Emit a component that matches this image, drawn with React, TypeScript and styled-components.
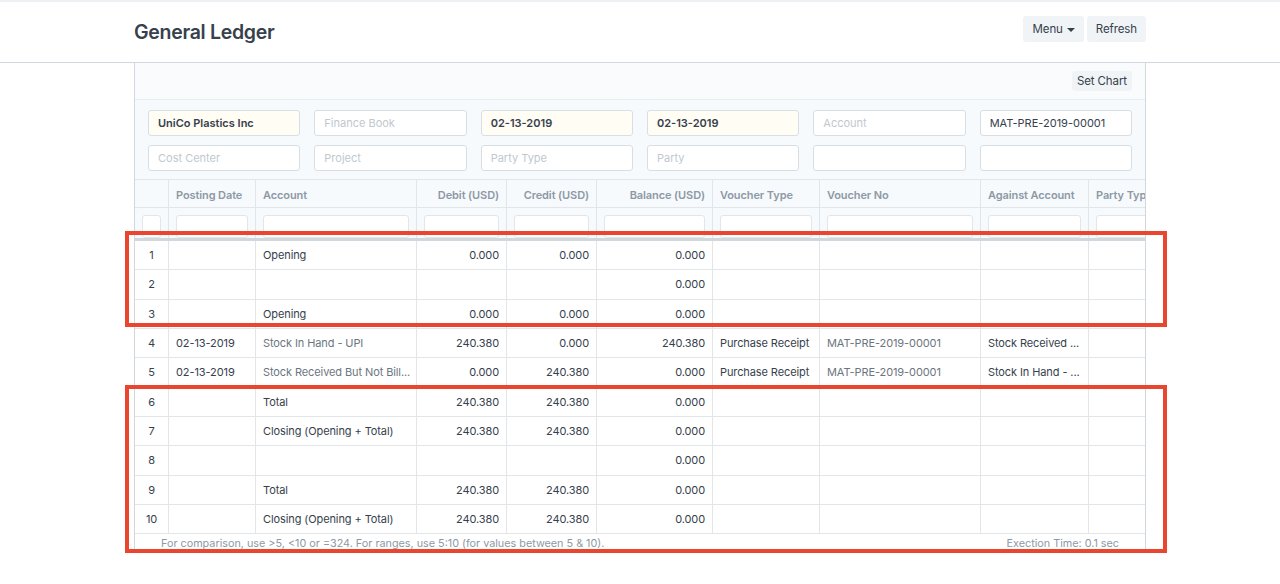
import styled, { createGlobalStyle } from "styled-components";

const GlobalStyle = createGlobalStyle`
  * { box-sizing: border-box; }
  body {
    margin: 0;
    background: #ffffff;
    font-family: Inter, "Noto Sans", "Liberation Sans", sans-serif;
    color: #36414c;
  }
`;

const Root = styled.div`
  position: relative;
  width: 1280px;
  height: 584px;
  overflow: hidden;
`;

const TopStrip = styled.div`
  height: 2px;
  background: #eef1f4;
`;

const PageHead = styled.div`
  height: 61px;
  border-bottom: 1px solid #d1d8dd;
`;

const Container = styled.div`
  width: 1012px;
  margin: 0 auto;
`;

const HeadInner = styled(Container)`
  height: 100%;
  display: flex;
  justify-content: space-between;
  align-items: flex-start;
`;

const Title = styled.h1`
  margin: 17px 0 0;
  font-size: 19.5px;
  font-weight: 600;
  line-height: 26px;
  color: #36414c;
  letter-spacing: -0.3px;
`;

const Actions = styled.div`
  display: flex;
  gap: 3px;
  margin-top: 14px;
`;

const Button = styled.button<{ $small?: boolean }>`
  font-family: inherit;
  border: none;
  border-radius: 3px;
  background: #f0f4f7;
  color: #36414c;
  font-size: 11.5px;
  letter-spacing: -0.1px;
  height: ${(p) => (p.$small ? "20px" : "26px")};
  padding: ${(p) => (p.$small ? "0 5px" : "0 9px")};
  display: flex;
  align-items: center;
  gap: 4px;
  cursor: pointer;
`;

const Caret = styled.span`
  width: 0;
  height: 0;
  border-left: 4px solid transparent;
  border-right: 4px solid transparent;
  border-top: 4px solid #36414c;
  margin-top: 1px;
`;

const Page = styled(Container)`
  border-left: 1px solid #d1d8dd;
  border-right: 1px solid #d1d8dd;
`;

const ChartBar = styled.div`
  height: 37px;
  background: #fafbfc;
  border-bottom: 1px solid #e8ecef;
  display: flex;
  justify-content: flex-end;
  align-items: flex-start;
  padding: 8px 13px 0;
`;

const FilterArea = styled.div`
  background: #f7fafc;
  padding: 10px 13px 8px;
  display: grid;
  grid-template-columns: repeat(6, 1fr);
  column-gap: 14px;
  row-gap: 9px;
  border-bottom: 1px solid #e2e6e9;
`;

const FilterInput = styled.div<{ $req?: boolean; $placeholder?: boolean; $bold?: boolean }>`
  height: 26px;
  border: 1px solid #d8dfe4;
  border-radius: 3px;
  background: ${(p) => (p.$req ? "#fffdf4" : "#ffffff")};
  font-size: 11px;
  padding: 0 9px;
  display: flex;
  align-items: center;
  color: ${(p) => (p.$placeholder ? "#c0c8cf" : "#36414c")};
  font-weight: ${(p) => (p.$bold ? 600 : 400)};
`;

const cols = "34px 87px 161px 90px 90px 116px 107px 161px 108px 100px";

const TableWrap = styled.div`
  overflow: hidden;
`;

const Row = styled.div<{ $h: number; $head?: boolean; $thick?: boolean }>`
  display: grid;
  grid-template-columns: ${cols};
  height: ${(p) => p.$h}px;
  background: ${(p) => (p.$head ? "#f7fafc" : "#ffffff")};
  border-bottom: ${(p) => (p.$thick ? "3px solid #d1d8dd" : "1px solid #e2e6e9")};
`;

const Cell = styled.div<{ $align?: "left" | "right" | "center"; $muted?: boolean }>`
  border-right: 1px solid #e2e6e9;
  padding: 0 7px;
  display: flex;
  align-items: center;
  justify-content: ${(p) =>
    p.$align === "right" ? "flex-end" : p.$align === "center" ? "center" : "flex-start"};
  font-size: 11px;
  letter-spacing: -0.1px;
  color: ${(p) => (p.$muted ? "#6c7680" : "#36414c")};
  white-space: nowrap;
  overflow: hidden;
`;

const HeadCell = styled(Cell)`
  font-weight: 600;
  color: #8d99a6;
  padding-top: 2px;
`;

const FilterCell = styled(Cell)`
  align-items: flex-start;
  padding-top: 7px;
`;

const MiniInput = styled.div`
  width: 100%;
  height: 23px;
  background: #ffffff;
  border: 1px solid #e2e6e9;
  border-radius: 3px;
`;

const Footer = styled.div`
  height: 19px;
  display: flex;
  justify-content: space-between;
  align-items: center;
  padding: 0 26px;
  font-size: 10.8px;
  color: #8d99a6;
`;

const Highlight = styled.div`
  position: absolute;
  left: 125px;
  width: 1042px;
  border: 4px solid #e9452f;
  pointer-events: none;
`;

type Line = {
  date?: string;
  account?: string;
  muted?: boolean;
  debit?: string;
  credit?: string;
  balance?: string;
  vtype?: string;
  vno?: string;
  against?: string;
};

const lines: Line[] = [
  { account: "Opening", debit: "0.000", credit: "0.000", balance: "0.000" },
  { balance: "0.000" },
  { account: "Opening", debit: "0.000", credit: "0.000", balance: "0.000" },
  {
    date: "02-13-2019",
    account: "Stock In Hand - UPI",
    muted: true,
    debit: "240.380",
    credit: "0.000",
    balance: "240.380",
    vtype: "Purchase Receipt",
    vno: "MAT-PRE-2019-00001",
    against: "Stock Received ...",
  },
  {
    date: "02-13-2019",
    account: "Stock Received But Not Bill...",
    muted: true,
    debit: "0.000",
    credit: "240.380",
    balance: "0.000",
    vtype: "Purchase Receipt",
    vno: "MAT-PRE-2019-00001",
    against: "Stock In Hand - ...",
  },
  { account: "Total", debit: "240.380", credit: "240.380", balance: "0.000" },
  { account: "Closing (Opening + Total)", debit: "240.380", credit: "240.380", balance: "0.000" },
  { balance: "0.000" },
  { account: "Total", debit: "240.380", credit: "240.380", balance: "0.000" },
  { account: "Closing (Opening + Total)", debit: "240.380", credit: "240.380", balance: "0.000" },
];

const headers: { label: string; align?: "right" }[] = [
  { label: "" },
  { label: "Posting Date" },
  { label: "Account" },
  { label: "Debit (USD)", align: "right" },
  { label: "Credit (USD)", align: "right" },
  { label: "Balance (USD)", align: "right" },
  { label: "Voucher Type" },
  { label: "Voucher No" },
  { label: "Against Account" },
  { label: "Party Type" },
];

const filters = [
  { text: "UniCo Plastics Inc", req: true, bold: true },
  { text: "Finance Book", placeholder: true },
  { text: "02-13-2019", req: true, bold: true },
  { text: "02-13-2019", req: true, bold: true },
  { text: "Account", placeholder: true },
  { text: "MAT-PRE-2019-00001" },
  { text: "Cost Center", placeholder: true },
  { text: "Project", placeholder: true },
  { text: "Party Type", placeholder: true },
  { text: "Party", placeholder: true },
  { text: "" },
  { text: "" },
];

export default function App() {
  return (
    <Root>
      <GlobalStyle />
      <TopStrip />
      <PageHead>
        <HeadInner>
          <Title>General Ledger</Title>
          <Actions>
            <Button>
              Menu <Caret />
            </Button>
            <Button>Refresh</Button>
          </Actions>
        </HeadInner>
      </PageHead>
      <Page>
        <ChartBar>
          <Button $small>Set Chart</Button>
        </ChartBar>
        <FilterArea>
          {filters.map((f, i) => (
            <FilterInput key={i} $req={f.req} $bold={f.bold} $placeholder={f.placeholder}>
              {f.text}
            </FilterInput>
          ))}
        </FilterArea>
        <TableWrap>
          <Row $h={28} $head>
            {headers.map((h, i) => (
              <HeadCell key={i} $align={h.align}>
                {h.label}
              </HeadCell>
            ))}
          </Row>
          <Row $h={33} $head $thick>
            {headers.map((_, i) => (
              <FilterCell key={i}>
                <MiniInput />
              </FilterCell>
            ))}
          </Row>
          {lines.map((l, i) => (
            <Row key={i} $h={29.33}>
              <Cell $align="center">{i + 1}</Cell>
              <Cell>{l.date}</Cell>
              <Cell $muted={l.muted}>{l.account}</Cell>
              <Cell $align="right">{l.debit}</Cell>
              <Cell $align="right">{l.credit}</Cell>
              <Cell $align="right">{l.balance}</Cell>
              <Cell>{l.vtype}</Cell>
              <Cell $muted>{l.vno}</Cell>
              <Cell>{l.against}</Cell>
              <Cell />
            </Row>
          ))}
        </TableWrap>
        <Footer>
          <span>For comparison, use &gt;5, &lt;10 or =324. For ranges, use 5:10 (for values between 5 &amp; 10).</span>
          <span>Exection Time: 0.1 sec</span>
        </Footer>
      </Page>
      <Highlight style={{ top: 231, height: 96 }} />
      <Highlight style={{ top: 385, height: 168 }} />
    </Root>
  );
}
